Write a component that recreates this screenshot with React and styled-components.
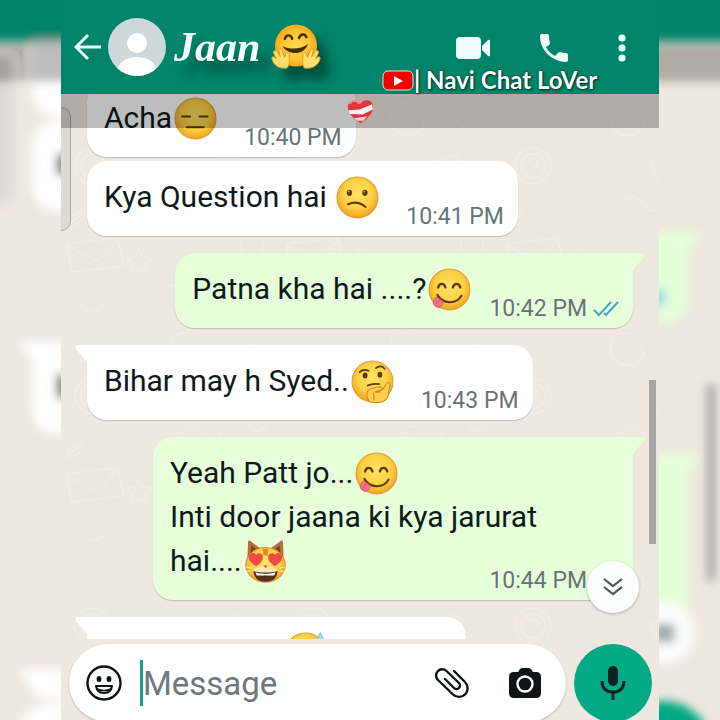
import { useState } from "react";
import styled, { createGlobalStyle } from "styled-components";

const GlobalStyle = createGlobalStyle`
  * {
    box-sizing: border-box;
  }

  body {
    margin: 0;
    background-color: #efe8e0;
    font-family: Roboto, "Noto Sans", sans-serif;
  }

  button {
    border: none;
    padding: 0;
    background: none;
    cursor: pointer;
  }

  svg {
    display: block;
  }
`;

const Page = styled.div`
  position: relative;
  height: 100vh;
  padding: 0 61px;
  overflow: hidden;
`;

const BackdropSvg = styled.svg`
  position: absolute;
  top: 0;
  left: 0;
  width: 100%;
  height: 100%;
`;

const Phone = styled.main`
  position: relative;
  height: 100%;
  display: flex;
  flex-direction: column;
  background-color: #efe8e0;
  overflow: hidden;
`;

const Header = styled.header`
  flex: none;
  height: 94px;
  display: flex;
  justify-content: space-between;
  background-color: #018469;
  color: #f4fffd;
  z-index: 2;
`;

const Contact = styled.div`
  display: flex;
  align-items: center;
  padding-left: 13px;
`;

const BackButton = styled.button`
  width: 28px;
  color: #e6fffb;
`;

const Avatar = styled.div`
  width: 58px;
  height: 58px;
  margin-left: 6px;
  border-radius: 50%;
  overflow: hidden;
`;

const Name = styled.h1`
  margin: 0 0 0 8px;
  display: flex;
  align-items: center;
  gap: 12px;
  font-family: "Liberation Serif", serif;
  font-size: 42px;
  line-height: 48px;
  font-weight: 700;
  font-style: italic;
  filter: drop-shadow(10px 12px 5px rgba(0, 50, 40, 0.6));
`;

const HeaderSide = styled.div`
  width: 277px;
  display: flex;
  flex-direction: column;
  justify-content: flex-end;
`;

const Actions = styled.div`
  display: flex;
  align-items: center;
  justify-content: space-between;
  height: 36px;
  padding: 0 32px 0 74px;
`;

const Caption = styled.div`
  display: flex;
  align-items: center;
  height: 28px;
  color: #fff;
  font-family: Lato, sans-serif;
  font-size: 24px;
  line-height: 28px;
  font-weight: 700;
  white-space: nowrap;
  text-shadow: 0 0 2px #00332a, 1px 1px 2px #00332a;
`;

const Chat = styled.section`
  position: relative;
  flex: 1;
  min-height: 0;
  overflow: hidden;
`;

const Doodles = styled.svg`
  position: absolute;
  top: 0;
  left: 0;
  width: 100%;
  height: 100%;
`;

const Strip = styled.div`
  position: absolute;
  top: 0;
  left: 0;
  right: 0;
  height: 34px;
  display: flex;
  align-items: center;
  justify-content: center;
  background-color: rgba(0, 0, 0, 0.26);
  z-index: 1;
`;

const SideTab = styled.div`
  position: absolute;
  top: 13px;
  left: -20px;
  width: 30px;
  height: 124px;
  border: 1px solid #aaa59f;
  border-radius: 10px;
  background-color: #dfdad4;
`;

const Thread = styled.ol`
  position: relative;
  display: flex;
  flex-direction: column;
  align-items: flex-start;
  margin: -12px 0 0;
  padding: 0 26px;
  list-style: none;
`;

const Bubble = styled.li`
  position: relative;
  flex: none;
  display: grid;
  grid-template-columns: ${(props) => (props.$long ? "auto" : "auto auto")};
  column-gap: ${(props) => (props.$out ? "17px" : "26px")};
  align-self: ${(props) => (props.$out ? "flex-end" : "flex-start")};
  max-width: 88%;
  margin-top: ${(props) => (props.$grouped ? "4px" : "17px")};
  padding: 14px 14px 17px 17px;
  border-radius: 20px;
  border-top-left-radius: ${(props) => (props.$tail && !props.$out ? 0 : "20px")};
  border-top-right-radius: ${(props) => (props.$tail && props.$out ? 0 : "20px")};
  background-color: ${(props) => (props.$out ? "#e6ffda" : "#fff")};
  box-shadow: 0 1px 1px rgba(90, 75, 60, 0.28);

  &:first-child {
    margin-top: 0;
  }
`;

const PeekBubble = styled(Bubble)`
  display: flex;
  justify-content: center;
  width: 70%;
  max-width: 379px;
  padding-left: 70px;
`;

const Tail = styled.svg`
  position: absolute;
  top: 0;
  left: ${(props) => (props.$out ? "100%" : "-12px")};
  transform: ${(props) => (props.$out ? "none" : "scaleX(-1)")};
`;

const Body = styled.p`
  grid-row: 1;
  margin: 0;
  color: #0d1a1c;
  font-size: 30px;
  line-height: 44px;
  white-space: pre-line;
`;

const LongBody = styled(Body)`
  grid-column: 1;
  max-width: 449px;
`;

const Keep = styled.span`
  white-space: nowrap;
`;

const Meta = styled.div`
  grid-row: 1;
  grid-column: ${(props) => (props.$long ? 1 : 2)};
  align-self: end;
  justify-self: end;
  display: flex;
  align-items: center;
  gap: 6px;
  height: 28px;
  margin-bottom: -12px;
  color: #667478;
  font-size: 23px;
  line-height: 28px;
  white-space: nowrap;
`;

const EmojiSvg = styled.svg`
  flex: none;
  display: inline-block;
  width: ${(props) => props.$size || 43}px;
  height: ${(props) => props.$size || 43}px;
  vertical-align: middle;
  overflow: visible;
`;

const InlineEmoji = styled(EmojiSvg)`
  margin: -8px 1px -4px 2px;
`;

const Scrollbar = styled.div`
  position: absolute;
  top: 286px;
  right: 3px;
  width: 7px;
  height: 164px;
  background-color: #a7a6a4;
`;

const JumpButton = styled.button`
  position: absolute;
  right: 20px;
  bottom: 26px;
  width: 52px;
  height: 52px;
  display: flex;
  align-items: center;
  justify-content: center;
  border-radius: 50%;
  background-color: #fcfdfd;
  box-shadow: 0 1px 3px rgba(60, 60, 50, 0.35);
`;

const Composer = styled.form`
  flex: none;
  display: flex;
  gap: 8px;
  height: 81px;
  padding: 5px 7px 0 8px;
`;

const Pill = styled.div`
  flex: 1;
  min-width: 0;
  height: 78px;
  display: flex;
  align-items: center;
  padding: 0 24px 0 16px;
  border-radius: 39px;
  background-color: #fff;
  box-shadow: 0 1px 2px rgba(90, 75, 60, 0.35);
`;

const Caret = styled.span`
  flex: none;
  width: 3px;
  height: 46px;
  margin-left: 17px;
  background-color: #12a184;
`;

const MessageInput = styled.input`
  flex: 1;
  min-width: 0;
  height: 46px;
  padding: 0;
  border: none;
  outline: none;
  color: #0d1a1c;
  font-family: Roboto, sans-serif;
  font-size: 33px;

  &::placeholder {
    color: #6d797d;
    opacity: 1;
  }
`;

const PillButtons = styled.div`
  display: flex;
  align-items: center;
  gap: 38px;
`;

const MicButton = styled.button`
  flex: none;
  width: 78px;
  height: 78px;
  display: flex;
  align-items: center;
  justify-content: center;
  border-radius: 50%;
  background-color: #04a985;
`;

const YellowFace = () => (
  <>
    <defs>
      <radialGradient id="face" cx="50%" cy="42%" r="60%">
        <stop offset="0" stopColor="#ffe467" />
        <stop offset="0.6" stopColor="#fdd042" />
        <stop offset="1" stopColor="#ee9d1d" />
      </radialGradient>
    </defs>
    <circle cx="32" cy="32" r="30.5" fill="url(#face)" stroke="#d99a34" strokeWidth="1.5" />
  </>
);

const dark = "#5b3a12";

const faces = {
  expressionless: {
    label: "expressionless face",
    art: (
      <>
        <YellowFace />
        <g stroke={dark} strokeWidth="3" strokeLinecap="round">
          <path d="M12 29h12M38 29h12M19 45h25" />
        </g>
      </>
    ),
  },
  confused: {
    label: "confused face",
    art: (
      <>
        <YellowFace />
        <ellipse cx="20" cy="25" rx="4" ry="4.6" fill={dark} />
        <ellipse cx="43" cy="25" rx="4" ry="4.6" fill={dark} />
        <circle cx="19" cy="23" r="1.4" fill="#c59a55" />
        <circle cx="42" cy="23" r="1.4" fill="#c59a55" />
        <path d="M18 42c9-4 19-2 26 4" fill="none" stroke={dark} strokeWidth="3" strokeLinecap="round" />
      </>
    ),
  },
  yum: {
    label: "face savouring food",
    art: (
      <>
        <YellowFace />
        <g fill="none" stroke={dark} strokeLinecap="round">
          <path d="M15 29c2-7 9-7 11 0M37 29c2-7 9-7 11 0" strokeWidth="3.4" />
          <path d="M14 40c8 14 28 15 36 1" strokeWidth="3" />
        </g>
        <path d="M13 43l10 7c-1 7-7 11-12 7s-4-10 2-14z" fill="#ef7485" stroke="#c94d63" strokeWidth="1.2" />
        <path d="M17 47l-5 7" stroke="#c94d63" strokeWidth="1.4" />
      </>
    ),
  },
  thinking: {
    label: "thinking face",
    art: (
      <>
        <YellowFace />
        <ellipse cx="21" cy="23" rx="3.6" ry="4.4" fill={dark} />
        <ellipse cx="43" cy="22" rx="3.6" ry="4.4" fill={dark} />
        <g fill="none" stroke={dark} strokeWidth="2.6" strokeLinecap="round">
          <path d="M13 18c4-4 8-4 13-2M37 12c5-4 10-3 13 1M25 38c6-3 12-3 17-2" />
        </g>
        <path
          d="M27 62c-4-7-5-13-1-17 3-4 10-4 16-5 5-1 6 4 1 5l-7 2c5 1 9-1 12-4l5-8c2-3 6-1 5 2l-2 11c0 9-6 15-15 15-5 0-10 2-14-1z"
          fill="#ffd04a"
          stroke="#d4872a"
          strokeWidth="1.6"
        />
        <path d="M33 49c2 3 1 7 1 11M35 48h9" fill="none" stroke="#d4872a" strokeWidth="1.6" />
      </>
    ),
  },
  catEyes: {
    label: "smiling cat with heart eyes",
    art: (
      <>
        <path d="M5 29L6 3c0-2 2-3 4-1l15 11h14L54 2c2-2 4-1 4 1l1 26z" fill="#b96e34" />
        <path d="M10 20l1-12 10 8zM54 20L53 8l-10 8z" fill="#70452f" />
        <ellipse cx="32" cy="37" rx="29.5" ry="26" fill="url(#face)" stroke="#cf8529" strokeWidth="1.2" />
        <path d="M28 13h8l-1 10h-6z" fill="#d98a2a" />
        <path d="M18 39C9 33 5 27 8 22c3-4 8-3 10 0 4-4 9-2 10 2 1 6-4 11-10 15zM46 39c9-6 13-12 10-17-3-4-8-3-10 0-4-4-9-2-10 2-1 6 4 11 10 15z" fill="#f04a46" />
        <ellipse cx="32" cy="47" rx="18" ry="8" fill="#fce7b2" />
        <path d="M29 38h6l-3 4z" fill="#c44f50" />
        <path d="M14 46c10 3 26 3 36 0-1 12-9 16-18 16s-17-4-18-16z" fill="#54301c" />
        <path d="M17 48c9 3 21 3 30 0l-2 5H19z" fill="#fff" />
        <path d="M3 40l9 2M2 47l9-1M61 40l-9 2M62 47l-9-1" stroke="#fff0bd" strokeWidth="1.4" />
      </>
    ),
  },
  hug: {
    label: "hugging face",
    art: (
      <>
        <circle cx="32" cy="30" r="28" fill="url(#hugFace)" />
        <defs>
          <radialGradient id="hugFace">
            <stop offset="0" stopColor="#ffdc4e" />
            <stop offset="0.7" stopColor="#fcc02f" />
            <stop offset="1" stopColor="#f6a723" />
          </radialGradient>
        </defs>
        <g fill="none" stroke="#4a2d08" strokeWidth="3.2" strokeLinecap="round">
          <path d="M17 21c2-6 8-6 10 0M36 20c2-6 8-6 10-1" />
        </g>
        <path d="M14 31c11 5 25 4 34-3-3 9-10 12-17 12-7 0-13-3-17-9z" fill="#4a2d08" />
        <g fill="#ffe06a" stroke="#dc9420" strokeWidth="1.2">
          <path d="M20 60C9 62 2 56 0 48c-1-3 2-4 4-2l2 2-4-8c-1-3 3-5 5-2l4 7-2-8c-1-3 3-4 4-1l4 10 1-5c1-3 5-2 5 1 0 8 1 14-3 18z" />
          <path d="M43 60c11 2 19-4 21-12 1-3-2-4-4-2l-2 2 4-8c1-3-3-5-5-2l-4 7 2-8c1-3-3-4-4-1l-4 10-1-5c-1-3-5-2-5 1 0 8-1 14 2 18z" />
        </g>
      </>
    ),
  },
  sweat: {
    label: "smiling face with sweat",
    art: (
      <>
        <YellowFace />
        <path d="M54 1c-4 7-6 12-3 16 5 3 9-1 8-6z" fill="#a9dcf2" stroke="#5fa9c9" />
      </>
    ),
  },
  heart: {
    label: "mending heart",
    art: (
      <>
        <path d="M32 60C14 48 2 36 2 21 2 5 23-1 32 14 41-1 62 5 62 21c0 15-12 27-30 39z" fill="#e3353f" />
        <path d="M7 12c6-8 17-7 21 0" fill="none" stroke="#ff8b8b" strokeWidth="5" strokeLinecap="round" />
        <path d="M3 29l27-2 30-12 1 12-24 12-30-1z" fill="#fff6f3" />
        <path d="M17 48l31-5-9 11-15 0z" fill="#f5d3d0" />
      </>
    ),
  },
};

const Emoji = ({ name, size }) => {
  const Icon = size ? EmojiSvg : InlineEmoji;

  return (
    <Icon viewBox="0 0 64 64" $size={size} role="img" aria-label={faces[name].label}>
      {faces[name].art}
    </Icon>
  );
};

const Backdrop = () => (
  <BackdropSvg viewBox="0 0 720 720" preserveAspectRatio="none" aria-hidden="true">
    <defs>
      <filter id="soft" x="-10%" y="-10%" width="120%" height="120%">
        <feGaussianBlur stdDeviation="4" />
      </filter>
    </defs>
    <rect width="720" height="720" fill="#efe8e0" />
    <g transform="translate(-72 -72) scale(1.2)" filter="url(#soft)">
      <rect x="30" y="107" width="41" height="123" rx="8" fill="#dedad5" />
      <rect x="87" y="82" width="267" height="75" rx="20" fill="#fff" />
      <rect x="87" y="160" width="433" height="76" rx="20" fill="#fff" />
      <rect x="107" y="188" width="12" height="18" fill="#777979" />
      <path d="M75 345h60v76h-28q-20 0-20-20v-42z" fill="#fff" />
      <rect x="107" y="372" width="12" height="20" fill="#777979" />
      <path d="M75 618h60v24H92z" fill="#fff" />
      <rect x="69" y="645" width="497" height="78" rx="39" fill="#fff" />
      <rect x="87" y="668" width="34" height="34" rx="17" fill="#9fa4a4" />
      <path d="M500 253h145l-12 16v40q0 20-20 20H500z" fill="#e3ffd8" />
      <rect x="592" y="302" width="22" height="12" fill="#8fd6e2" />
      <path d="M500 438h145l-12 16v130q0 17-17 17H500z" fill="#e3ffd8" />
      <circle cx="613" cy="587" r="26" fill="#fbfdfc" />
      <rect x="604" y="580" width="18" height="15" fill="#9fabab" />
      <rect x="649" y="380" width="7" height="164" fill="#a5a4a2" />
      <circle cx="613" cy="683" r="39" fill="#04a985" />
      <rect x="0" y="94" width="720" height="34" fill="#000" opacity="0.26" />
      <rect x="0" y="0" width="720" height="94" fill="#018469" />
    </g>
  </BackdropSvg>
);

const ChatWallpaper = () => (
  <Doodles aria-hidden="true">
    <defs>
      <pattern id="doodle" width="220" height="230" patternUnits="userSpaceOnUse">
        <g fill="none" stroke="#fffaf4" strokeWidth="1.2" opacity="0.3">
          <circle cx="32" cy="72" r="18" />
          <circle cx="32" cy="72" r="12" />
          <path d="M28 67q5-6 8 0t-6 8M5 128l18-14M3 134l18-14M8 136l12-9" />
          <path d="M5 150l52-6 6 28-52 6zM6 152l30 15 22-22" />
          <path d="M78 155l4 8 9 1-7 6 2 9-8-5-8 5 2-9-7-6 9-1z" />
          <path d="M110 15q16-14 28 2t-6 24q-26 2-22-26zM150 70l26-10 8 20-26 10z" />
          <path d="M170 20l12 14 16-20M120 110q10-16 22 0t20-4M180 130v30h22v-30zM100 200q12-18 26 0M160 200l30-12M20 210q10 14 24 0" />
          <circle cx="196" cy="98" r="9" />
        </g>
      </pattern>
    </defs>
    <rect width="100%" height="100%" fill="url(#doodle)" />
  </Doodles>
);

const Ticks = () => (
  <svg width="26" height="18" viewBox="0 0 26 18" fill="none" stroke="#4ba5cf" strokeWidth="2" role="img" aria-label="Read">
    <path d="M1 10l5 5L18 2M11 13l2 2L25 2" />
  </svg>
);

const BubbleTail = ({ out }) => (
  <Tail $out={out} width="12" height="18" viewBox="0 0 12 18" aria-hidden="true">
    <path d="M0 0h10q3 1 1 4L0 17z" fill={out ? "#e6ffda" : "#fff"} />
  </Tail>
);

const messages = [
  { id: 1, time: "10:40 PM", body: <>Acha<Emoji name="expressionless" /></> },
  { id: 2, time: "10:41 PM", grouped: true, body: <>Kya Question hai <Emoji name="confused" /></> },
  { id: 3, time: "10:42 PM", out: true, tail: true, body: <>Patna kha hai ....?<Emoji name="yum" /></> },
  { id: 4, time: "10:43 PM", tail: true, body: <>Bihar may h Syed..<Emoji name="thinking" /></> },
  {
    id: 5,
    time: "10:44 PM",
    out: true,
    tail: true,
    long: true,
    body: (
      <>
        Yeah Patt jo...<Emoji name="yum" />
        {"\n"}Inti door jaana ki kya jarurat <Keep>hai....<Emoji name="catEyes" /></Keep>
      </>
    ),
  },
];

const Message = ({ message }) => {
  const { out, tail, long, grouped, time, body } = message;
  const Text = long ? LongBody : Body;

  return (
    <Bubble $out={out} $tail={tail} $long={long} $grouped={grouped}>
      {tail && <BubbleTail out={out} />}
      <Text>{body}</Text>
      <Meta $long={long}>
        <time>{time}</time>
        {out && <Ticks />}
      </Meta>
    </Bubble>
  );
};

const App = () => {
  const [draft, setDraft] = useState("");

  return (
    <>
      <GlobalStyle />
      <Page>
        <Backdrop />
        <Phone>
          <Header>
            <Contact>
              <BackButton aria-label="Back">
                <svg width="28" height="28" viewBox="0 0 28 28" fill="none" stroke="currentColor" strokeWidth="3">
                  <path d="M27 14H3M14 2L2 14l12 12" />
                </svg>
              </BackButton>
              <Avatar>
                <svg width="58" height="58" viewBox="0 0 58 58" role="img" aria-label="Contact photo">
                  <rect width="58" height="58" fill="#cdd7dc" />
                  <circle cx="29" cy="25" r="10" fill="#fff" />
                  <path d="M9 54c1-10 9-15 20-15s19 5 20 15l-6 6H15z" fill="#fff" />
                </svg>
              </Avatar>
              <Name>
                Jaan
                <Emoji name="hug" size={48} />
              </Name>
            </Contact>
            <HeaderSide>
              <Actions>
                <button aria-label="Video call">
                  <svg width="34" height="24" viewBox="0 0 34 24" fill="#f0fffd">
                    <rect x="0" y="1" width="25" height="22" rx="4" />
                    <path d="M26 10l6-6q2-1 2 1v14q0 2-2 1l-6-6z" />
                  </svg>
                </button>
                <button aria-label="Voice call">
                  <svg width="30" height="30" viewBox="0 0 30 30" fill="#f0fffd">
                    <path d="M3 1h5q2 0 2 2 0 4 1 7 0 1-1 2l-3 2q3 6 9 9l3-3q1-1 2-1 3 1 6 1 2 0 2 2v5q0 2-2 2C12 28 1 17 1 3q0-2 2-2z" />
                  </svg>
                </button>
                <button aria-label="More options">
                  <svg width="10" height="28" viewBox="0 0 10 28" fill="#e6fffb">
                    <circle cx="5" cy="4" r="3.6" />
                    <circle cx="5" cy="14" r="3.6" />
                    <circle cx="5" cy="24" r="3.6" />
                  </svg>
                </button>
              </Actions>
              <Caption>
                <svg width="32" height="21" viewBox="0 0 32 21" role="img" aria-label="YouTube">
                  <rect x="1" y="1" width="30" height="19" rx="5" fill="#f40000" stroke="#f6d9d0" />
                  <path d="M12 6l9 5-9 5z" fill="#fff" />
                </svg>
                <span>| Navi Chat LoVer</span>
              </Caption>
            </HeaderSide>
          </Header>

          <Chat>
            <ChatWallpaper />
            <SideTab />
            <Thread>
              {messages.map((message) => (
                <Message key={message.id} message={message} />
              ))}
              <PeekBubble $tail>
                <BubbleTail />
                <Body>
                  <Emoji name="sweat" />
                </Body>
              </PeekBubble>
            </Thread>
            <Strip>
              <Emoji name="heart" size={27} />
            </Strip>
            <Scrollbar />
            <JumpButton aria-label="Scroll to latest">
              <svg width="20" height="20" viewBox="0 0 20 20" fill="none" stroke="#4b5658" strokeWidth="2.2">
                <path d="M1 2l9 7 9-7M1 10l9 7 9-7" />
              </svg>
            </JumpButton>
          </Chat>

          <Composer onSubmit={(e) => e.preventDefault()}>
            <Pill>
              <button type="button" aria-label="Emoji">
                <svg width="38" height="38" viewBox="0 0 38 38">
                  <circle cx="19" cy="19" r="16.5" fill="none" stroke="#0d1416" strokeWidth="2.4" />
                  <ellipse cx="14" cy="15" rx="2.4" ry="3" fill="#0d1416" />
                  <ellipse cx="24" cy="15" rx="2.4" ry="3" fill="#0d1416" />
                  <path d="M11 22h16q-1 7-8 7t-8-7z" fill="none" stroke="#0d1416" strokeWidth="2" strokeLinejoin="round" />
                  <path d="M12 25q7 3 14 0" fill="none" stroke="#0d1416" strokeWidth="1.6" />
                </svg>
              </button>
              <Caret />
              <MessageInput
                aria-label="Message"
                placeholder="Message"
                value={draft}
                onChange={(e) => setDraft(e.target.value)}
              />
              <PillButtons>
                <button type="button" aria-label="Attach">
                  <svg width="36" height="32" viewBox="0 0 36 32" fill="none" stroke="#0d1416" strokeWidth="2.4" strokeLinecap="round">
                    <path d="M20 4l11 11a8.5 8.5 0 0 1-12 12.5L4 13A6 6 0 0 1 12.500 4L25 16a3.500 3.500 0 0 1-5 5L11 12" />
                  </svg>
                </button>
                <button type="button" aria-label="Camera">
                  <svg width="34" height="32" viewBox="0 0 34 32">
                    <path d="M6 5h4l2-3q1-1 3-1h5q2 0 3 1l2 3h3q5 0 5 5v16q0 5-5 5H6q-5 0-5-5V10q0-5 5-5z" fill="#0d1416" />
                    <circle cx="17" cy="17" r="7.5" fill="none" stroke="#fff" strokeWidth="2.4" />
                  </svg>
                </button>
              </PillButtons>
            </Pill>
            <MicButton type="button" aria-label="Record voice message">
              <svg width="26" height="36" viewBox="0 0 26 36">
                <rect x="8" y="1" width="10" height="20" rx="5" fill="#0b2324" />
                <path d="M2 16c0 8 5 11 11 11s11-3 11-11M13 27v8" fill="none" stroke="#0b2324" strokeWidth="3" />
              </svg>
            </MicButton>
          </Composer>
        </Phone>
      </Page>
    </>
  );
};

export default App;
